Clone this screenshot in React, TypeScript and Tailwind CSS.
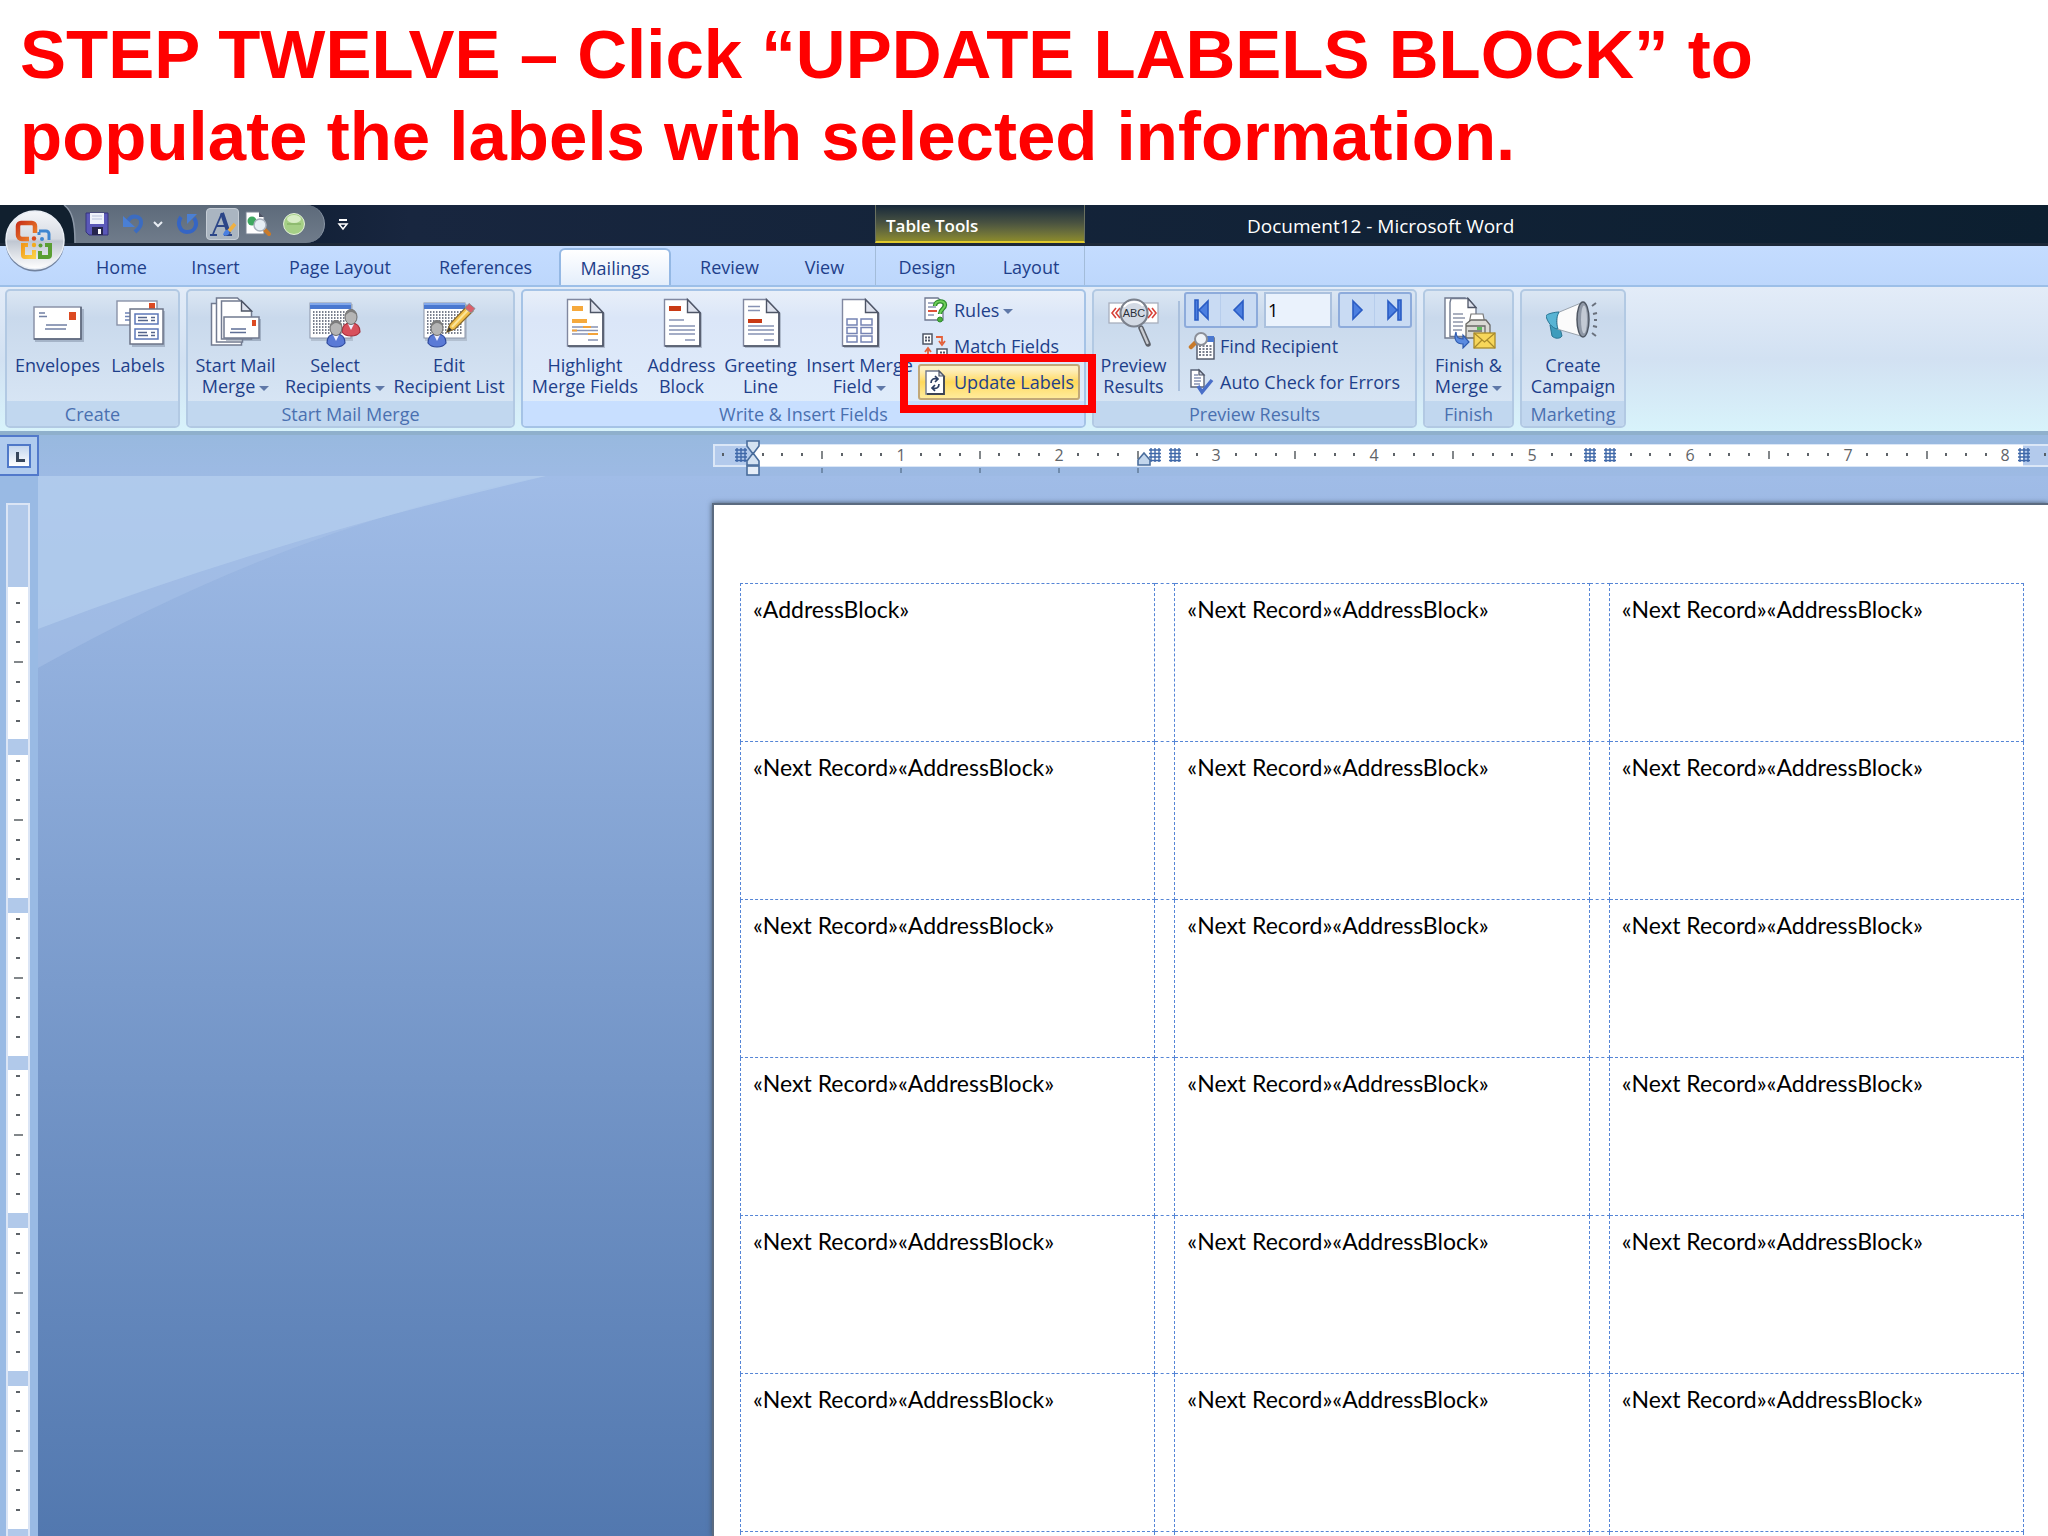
import React from 'react';

type IconProps = { children: React.ReactNode };

const BigIcon: React.FC<IconProps> = ({ children }) => (
  <svg className="h-[54px] w-[54px] shrink-0" viewBox="0 0 54 54" fill="none" aria-hidden="true">
    {children}
  </svg>
);

const SmallIcon: React.FC<IconProps> = ({ children }) => (
  <svg className="h-7 w-7 shrink-0" viewBox="0 0 28 28" fill="none" aria-hidden="true">
    {children}
  </svg>
);

const Person: React.FC<{ x: number; y: number; color: string; edge: string }> = ({ x, y, color, edge }) => (
  <g transform={`translate(${x} ${y})`}>
    <path d="M-9 14C-9 8-6 5 0 5s9 3 9 9c-2 3-5 4-9 4s-7-1-9-4z" fill={color} stroke={edge} strokeWidth="1.2" />
    <path d="M-3 6l3 6 3-6z" fill="#eef" />
    <ellipse cx="0" cy="-1" rx="6" ry="7.5" fill="#b5b5b5" stroke="#6b6b6b" strokeWidth="1" />
    <path d="M-6 -2c0-9 12-9 12 0-2-3-4-4-6-4s-4 2-6 4z" fill="#7d7d7d" />
  </g>
);

const Grid: React.FC = () => (
  <g>
    <rect x="3" y="9" width="42" height="37" fill="#8b95a5" opacity=".4" />
    <rect x="2" y="8" width="41" height="35" fill="#fff" stroke="#8a94a8" strokeWidth="1" />
    <rect x="2" y="8" width="41" height="6" fill="#4a78d0" />
    <rect x="2" y="8" width="41" height="2" fill="#83a8ea" />
    {[17, 20, 23, 26, 29, 32, 35, 38].map((y) => (
      <path key={y} d={`M5 ${y}h36`} stroke="#4d5668" strokeWidth="1.4" strokeDasharray="1.5 1.5" />
    ))}
  </g>
);

const DocSheet: React.FC<IconProps> = ({ children }) => (
  <BigIcon>
    <path d="M11 6h24l12 13v34H11z" fill="#7b8696" opacity=".45" />
    <path d="M9.500 4.500h23L45 17.500V51H9.500z" fill="#fff" stroke="#8188a0" strokeWidth="1.4" />
    <path d="M45 18v33H10" stroke="#4e5566" strokeWidth="1.6" />
    <path d="M32.500 4.500v13H45z" fill="#dfe3ee" stroke="#4e5566" strokeWidth="1.4" />
    {children}
  </BigIcon>
);

const EnvelopeIcon = () => (
  <BigIcon>
    <rect x="4" y="14" width="49" height="33" fill="#76839a" opacity=".45" />
    <rect x="3" y="12" width="47" height="32" fill="#fff" stroke="#8a93a8" strokeWidth="1.5" />
    <path d="M50 12v32H3" stroke="#5a6478" strokeWidth="1.5" />
    <rect x="38" y="17" width="7" height="8" fill="#dc4a22" />
    <path d="M8 18h6M8 21.500h8M15 30h21M14 34h21" stroke="#7280a4" strokeWidth="1.6" />
  </BigIcon>
);

const LabelsIcon = () => (
  <BigIcon>
    <rect x="6" y="6" width="40" height="24" fill="#fff" stroke="#8a93a8" strokeWidth="1.4" />
    <rect x="38" y="8" width="6" height="6" fill="#dc4a22" />
    <path d="M14 18h6M14 21.500h6M14 25h6" stroke="#6d83b5" strokeWidth="1.4" />
    <rect x="21" y="16" width="33" height="36" fill="#76839a" opacity=".45" />
    <rect x="19" y="14" width="33" height="35" fill="#fff" stroke="#6c7488" strokeWidth="1.5" />
    <path d="M24 19h23v10H24zM24 34h23v10H24z" stroke="#5c77b8" strokeWidth="1.5" />
    <path d="M27 22.500h9M40 22.500h4M27 25.500h10M40 25.500h4M27 37.500h9M40 37.500h4M27 40.500h10M40 40.500h4" stroke="#55658c" strokeWidth="1.3" />
  </BigIcon>
);

const StartMergeIcon = () => (
  <BigIcon>
    <path d="M2.500 8.500h30V50h-30z" fill="#fff" stroke="#727b90" strokeWidth="1.5" />
    <path d="M7.500 3h21l5 5v39h-26z" fill="#fff" stroke="#727b90" strokeWidth="1.5" />
    <path d="M12.500 6h20l10 10v28h-30z" fill="#fff" stroke="#727b90" strokeWidth="1.5" />
    <path d="M32.500 6v10h10z" fill="#dfe3ee" stroke="#4e5566" strokeWidth="1.4" />
    <rect x="17" y="24" width="35" height="22" fill="#76839a" opacity=".5" />
    <rect x="15" y="22" width="35" height="21" fill="#fff" stroke="#727b90" strokeWidth="1.5" />
    <rect x="43" y="25" width="4" height="6" fill="#dc4a22" />
    <path d="M22 34h15M21 37.500h16" stroke="#5f6f96" strokeWidth="1.5" />
  </BigIcon>
);

const SelectIcon = () => (
  <BigIcon>
    <Grid />
    <Person x={43} y={23} color="#d8505c" edge="#a5303c" />
    <Person x={28} y={34} color="#5a7ad6" edge="#2f4a9c" />
  </BigIcon>
);

const EditIcon = () => (
  <BigIcon>
    <Grid />
    <path d="M25 37l3-8 17-18 6 5-18 18z" fill="#f2c14a" stroke="#8a6a2a" strokeWidth="1.2" />
    <path d="M30 32l17-18" stroke="#fbe59a" strokeWidth="2" />
    <path d="M25 37l2-5 3 3z" fill="#3b3b3b" />
    <path d="M43 13l4-4.500 6 5-4 4.500z" fill="#d9606a" stroke="#8b8f98" strokeWidth="1" />
    <Person x={15} y={34} color="#5a7ad6" edge="#2f4a9c" />
  </BigIcon>
);

const HighlightIcon = () => (
  <DocSheet>
    <rect x="14" y="11" width="11" height="5" fill="#f6a93c" />
    <rect x="14" y="24" width="15" height="4" fill="#f6a93c" />
    <path d="M14 32h26M14 35.500h26M14 39h26M30 45h10" stroke="#8792b4" strokeWidth="1.6" />
    <path d="M25 32h8M14 35.500h5M30 39h10" stroke="#f2a23a" strokeWidth="2.200" />
  </DocSheet>
);

const AddressIcon = () => (
  <DocSheet>
    <rect x="14" y="11" width="12" height="5" fill="#c93a14" />
    <path d="M14 25h15M14 31h26M14 35h26M14 39h26M30 45h10" stroke="#8792b4" strokeWidth="1.6" />
  </DocSheet>
);

const GreetingIcon = () => (
  <DocSheet>
    <rect x="14" y="24" width="14" height="4" fill="#c93a14" />
    <path d="M14 11.500h12M14 15.500h12M14 31h26M14 35h26M14 39h26M30 45h10" stroke="#8792b4" strokeWidth="1.6" />
  </DocSheet>
);

const MergeFieldIcon = () => (
  <DocSheet>
    <path
      d="M14 24h10v6H14zM28 24h11v6H28zM14 32.500h10v6H14zM28 32.500h11v6H28zM14 41h10v6H14zM28 41h11v6H28z"
      stroke="#7684b4"
      strokeWidth="1.5"
    />
  </DocSheet>
);

const PreviewIcon = () => (
  <BigIcon>
    <rect x="2" y="8" width="49" height="20" fill="#fff" stroke="#a8afbd" strokeWidth="1.3" />
    <path d="M9 13l-4 5 4 5M13 13l-4 5 4 5M41 13l4 5-4 5M45 13l4 5-4 5" stroke="#d8433a" strokeWidth="1.6" />
    <path d="M34 33l7 16" stroke="#5c6068" strokeWidth="5.500" strokeLinecap="round" />
    <path d="M34 33l6.500 15" stroke="#c9ccd2" strokeWidth="2.400" strokeLinecap="round" />
    <circle cx="27" cy="18" r="13.500" fill="#d3dae4" stroke="#7b818c" strokeWidth="2.200" />
    <path d="M17 12c4-6 15-7 19-1" stroke="#fff" strokeWidth="2" />
    <text x="27" y="22" textAnchor="middle" fontSize="11" fontFamily="Liberation Sans" fill="#2a2f38">ABC</text>
  </BigIcon>
);

const FinishIcon = () => (
  <BigIcon>
    <path d="M3 3h20v40H3z" fill="#fff" stroke="#727b90" strokeWidth="1.4" />
    <path d="M8 7.500l1-4h17l8 9v29H8z" fill="#fff" stroke="#727b90" strokeWidth="1.4" />
    <path d="M26 3.500v9h8z" fill="#dfe3ee" stroke="#4e5566" strokeWidth="1.3" />
    <path d="M11 19h10M11 23h12M11 27h10M11 31h10M11 35h9" stroke="#8e97ab" strokeWidth="1.4" />
    <path d="M29 19h12l2 10H27z" fill="#fff" stroke="#777" strokeWidth="1.2" />
    <path d="M24 29l5-4h15l4 5v10l-4 3H24z" fill="#dadad4" stroke="#6a6a66" strokeWidth="1.3" />
    <path d="M24 31h19v11M26 36h14" stroke="#6a6a66" strokeWidth="1.3" />
    <rect x="35" y="32" width="5" height="3" fill="#5cb85c" />
    <rect x="32" y="38" width="21" height="15" fill="#f7d65a" stroke="#a98a2a" strokeWidth="1.3" />
    <path d="M32 38l10.500 9L53 38M32 53l8-8M53 53l-8-8" stroke="#a98a2a" strokeWidth="1.2" />
    <path d="M14 37c0 6 3 7 7 7v-4l6 7-6 6v-4c-6 0-10-4-7-12z" fill="#5b8be0" stroke="#2f5cb0" strokeWidth="1.2" />
  </BigIcon>
);

const CampaignIcon = () => (
  <BigIcon>
    <path d="M4 30l2 11c3 3 8 3 10 0l-2-8z" fill="#3f9cbc" stroke="#2a7593" strokeWidth="1" />
    <path d="M11 18L35 8c5 8 5 24 0 33L11 34z" fill="#fbfbfb" stroke="#9aa3ad" strokeWidth="1" />
    <path d="M0 21c0-2 9-4 13-4-3 6-3 11-1 17-6 0-11-8-12-13z" fill="#58b4d4" stroke="#2a7593" strokeWidth="1" />
    <ellipse cx="37" cy="24.500" rx="6" ry="17.500" fill="#8f98a6" stroke="#4f5763" strokeWidth="1.500" />
    <ellipse cx="38" cy="24.500" rx="3" ry="14" fill="#c3cad4" />
    <path d="M46 11l4-3M47 19l4-1M47 31l4 1M46 38l4 3M48 25h3" stroke="#6a717d" strokeWidth="2" />
  </BigIcon>
);

const RulesIcon = () => (
  <SmallIcon>
    <path d="M3 2h13l5 5v17H3z" fill="#fff" stroke="#6f7890" strokeWidth="1.3" />
    <path d="M6 7h6M6 11h8M6 19h6" stroke="#8792b4" strokeWidth="1.3" />
    <path d="M6 15h9" stroke="#e0523a" strokeWidth="1.8" />
    <path d="M13 10c0-6 10-6 10-1 0 4-5 4-5 9" stroke="#2d8a2d" strokeWidth="4.400" />
    <path d="M13 10c0-6 10-6 10-1 0 4-5 4-5 9" stroke="#6fd05a" strokeWidth="2" />
    <circle cx="18" cy="23.500" r="2.500" fill="#4cb03c" stroke="#2d8a2d" />
  </SmallIcon>
);

const MatchIcon = () => (
  <SmallIcon>
    <rect x="1" y="2" width="9" height="10" fill="#fff" stroke="#4e5566" strokeWidth="1.5" />
    <path d="M3 5.500h5M3 8.500h5" stroke="#4e5566" strokeWidth="1.8" strokeDasharray="2 1" />
    <rect x="15" y="17" width="10" height="10" fill="#fff" stroke="#4e5566" strokeWidth="1.5" />
    <path d="M18 20.500h5M18 23.500h5" stroke="#4e5566" strokeWidth="1.8" strokeDasharray="2 1" />
    <path d="M14 5h6v6M17 9l3 4 3-4M6 25v-8M3 20l3-4 3 4" stroke="#e4603a" strokeWidth="1.8" />
  </SmallIcon>
);

const UpdateIcon = () => (
  <SmallIcon>
    <path d="M4 3h13l5 5v18H4z" fill="#fff" stroke="#6f7890" strokeWidth="1.4" />
    <path d="M22 8v18H5" stroke="#3c4354" strokeWidth="1.8" />
    <path d="M17 3v5h5z" fill="#cfd6e4" stroke="#4e5566" strokeWidth="1.2" />
    <path d="M9 15c0-4 3-5 6-4M13 8l3 3-3 3M17 16c0 4-3 5-6 4M13 23l-3-3 3-3" stroke="#2b3d62" strokeWidth="1.7" />
  </SmallIcon>
);

const FindIcon = () => (
  <SmallIcon>
    <rect x="9" y="6" width="17" height="21" fill="#fff" stroke="#4e5566" strokeWidth="1.4" />
    <rect x="17" y="4" width="9" height="6" fill="#4a78d0" />
    {[14, 17, 20, 23].map((y) => (
      <path key={y} d={`M11 ${y}h14`} stroke="#4d5668" strokeWidth="1.6" strokeDasharray="2 1.500" />
    ))}
    <path d="M3 15l4-4" stroke="#c87a2a" strokeWidth="4.500" strokeLinecap="round" />
    <circle cx="13" cy="7" r="6" fill="#eef3f8" stroke="#8b8f98" strokeWidth="2" />
  </SmallIcon>
);

const CheckIcon = () => (
  <SmallIcon>
    <path d="M3 2h8l5 5v12H3z" fill="#fff" stroke="#5b6478" strokeWidth="1.4" />
    <path d="M11 2v5h5z" fill="#cfd6e4" stroke="#4e5566" strokeWidth="1.2" />
    <path d="M6 7h4M6 10h7M6 13h7M6 16h6" stroke="#8792b4" strokeWidth="1.4" />
    <path d="M10 18l4 6L24 12" stroke="#4a6fc8" strokeWidth="3.500" />
  </SmallIcon>
);

const Caret = () => <span className="ml-1 inline-block border-x-[5px] border-t-[5px] border-x-transparent border-t-[#5f78a8] align-middle" />;

interface BigButtonProps {
  icon: React.ReactNode;
  lines: string[];
  width: string;
  caret?: boolean;
}

const BigButton: React.FC<BigButtonProps> = ({ icon, lines, width, caret }) => (
  <button className={`flex shrink-0 flex-col items-center gap-[6px] whitespace-nowrap pt-1 leading-[21px] ${width}`}>
    {icon}
    <span className="block">
      {lines.map((line, i) => (
        <span key={line} className="block">
          {line}
          {caret && i === lines.length - 1 && <Caret />}
        </span>
      ))}
    </span>
  </button>
);

interface GroupProps {
  title: string;
  width: string;
  active?: boolean;
  children: React.ReactNode;
}

const Group: React.FC<GroupProps> = ({ title, width, active, children }) => (
  <section
    className={`flex h-[139px] shrink-0 flex-col overflow-hidden rounded-[5px] border-2 ${width} ${
      active
        ? 'border-[#a5c3e6] bg-linear-to-b from-[#e8eff9] from-0% via-[#dbe6f8] via-20% to-[#e0edfb]'
        : 'border-[#b2c9e3] bg-linear-to-b from-[#dbe6f3] from-0% via-[#c9d9ec] via-20% to-[#dbe8f6]'
    }`}
  >
    <div className="flex flex-1">{children}</div>
    <h2 className={`h-[25px] text-center leading-[27px] text-[#4a70b0] ${active ? 'bg-[#c8dfff]' : 'bg-[#c1d7ef]'}`}>{title}</h2>
  </section>
);

const SmallButton: React.FC<{ icon: React.ReactNode; label: string; caret?: boolean }> = ({ icon, label, caret }) => (
  <button className="flex h-9 items-center gap-1 whitespace-nowrap pl-1">
    {icon}
    <span>
      {label}
      {caret && <Caret />}
    </span>
  </button>
);

const TABS = [
  { name: 'Home', cls: 'w-[91px]' },
  { name: 'Insert', cls: 'w-[97px]' },
  { name: 'Page Layout', cls: 'w-[152px]' },
  { name: 'References', cls: 'w-[139px]' },
  { name: 'Mailings', cls: 'mx-1 w-[112px]' },
  { name: 'Review', cls: 'w-[109px]' },
  { name: 'View', cls: 'mr-[10px] w-[81px]' },
];

const OfficeButton = () => (
  <button aria-label="Office" className="absolute left-1 top-[5px] z-10">
    <svg className="h-[62px] w-[62px]" viewBox="0 0 62 62" fill="none">
      <defs>
        <linearGradient id="orb" x1="0" y1="0" x2="0" y2="1">
          <stop offset="0" stopColor="#f4f6f9" />
          <stop offset=".48" stopColor="#d5dae2" />
          <stop offset=".52" stopColor="#bfc6d1" />
          <stop offset="1" stopColor="#ffffff" />
        </linearGradient>
        <linearGradient id="flame" x1="0" y1="0" x2="1" y2="1">
          <stop offset="0" stopColor="#c9341a" />
          <stop offset="1" stopColor="#f08a2c" />
        </linearGradient>
        <linearGradient id="amber" x1="0" y1="0" x2="1" y2="1">
          <stop offset="0" stopColor="#f29a1a" />
          <stop offset="1" stopColor="#fbcf45" />
        </linearGradient>
      </defs>
      <circle cx="31" cy="32" r="29.500" fill="#3d4a60" opacity=".6" />
      <circle cx="31" cy="30" r="29" fill="url(#orb)" stroke="#e9eef5" strokeWidth="1.500" />
      <path d="M25 29h-7a4 4 0 01-4-4V16a3 3 0 013-3h11a3 3 0 013 3v7" stroke="url(#flame)" strokeWidth="4.500" />
      <circle cx="30" cy="28.500" r="2.200" fill="#d9481c" />
      <path d="M35 25v-4h7a3 3 0 013 3v6" stroke="#3f86d0" strokeWidth="3" strokeDasharray="3 1 20" />
      <path d="M36 29a2 2 0 104 0 2 2 0 10-4 0z" fill="#3f86d0" />
      <path d="M24 35h-5v10a2 2 0 002 2h9v-7" stroke="url(#amber)" strokeWidth="4" />
      <circle cx="30" cy="35" r="2.200" fill="#f2ab1e" />
      <path d="M41 35h5v10a2 2 0 01-2 2h-8v-6" stroke="#5a9e32" strokeWidth="4" />
      <circle cx="36.500" cy="35.500" r="2" fill="#5a9e32" />
    </svg>
  </button>
);

const QuickAccess = () => (
  <div className="flex h-[38px] w-[325px] items-center overflow-hidden rounded-r-full border-r border-[#8d99a8] bg-linear-to-b from-[#5d6a7a] to-[#707c8b]">
    <svg className="mr-2 h-[38px] w-[77px] shrink-0" viewBox="0 0 77 38" fill="none" aria-hidden="true">
      <path d="M0 0H64C72 6 75 16 75 38H0z" fill="#11202f" />
      <path d="M64 0C72 6 75 16 75 38" stroke="#8d99a8" strokeWidth="1.500" />
    </svg>
    <button aria-label="Save" className="h-6 w-6">
      <svg viewBox="0 0 24 24" fill="none">
        <path d="M1 1h22v22H4l-3-3z" fill="#5a58b8" stroke="#34337c" />
        <rect x="5" y="1" width="14" height="11" fill="#eef2fb" />
        <path d="M7 4h10M7 7h10" stroke="#b7c2dd" />
        <rect x="7" y="15" width="11" height="8" fill="#26264e" />
        <rect x="13" y="17" width="3" height="5" fill="#fff" />
      </svg>
    </button>
    <button aria-label="Undo" className="ml-[13px] h-6 w-6">
      <svg viewBox="0 0 24 24" fill="none">
        <path d="M6 9c4-7 14-5 13 2 0 4-3 6-6 9" stroke="#3c6cc0" strokeWidth="4" />
        <path d="M1 4v11h12z" fill="#4a7fd4" />
      </svg>
    </button>
    <svg className="ml-[6px] h-3 w-3" viewBox="0 0 12 12" fill="none" aria-hidden="true">
      <path d="M2 4l4 4 4-4" stroke="#e8edf4" strokeWidth="2" />
    </svg>
    <button aria-label="Repeat" className="ml-3 h-6 w-6">
      <svg viewBox="0 0 24 24" fill="none">
        <path d="M5 5c-4 5-2 15 6 15 9 0 11-9 7-14" stroke="#3565c4" strokeWidth="4" />
        <path d="M11 2h10L11 12z" fill="#4a7fd4" />
      </svg>
    </button>
    <button aria-label="Styles" className="ml-[6px] flex h-8 w-[33px] items-center justify-center rounded-sm border border-[#c5cdd6] bg-[#aab5c1]">
      <svg className="h-7 w-7" viewBox="0 0 28 28" fill="none">
        <path d="M4 24L13 3" stroke="#2c4688" strokeWidth="1.800" />
        <path d="M13 3l7 21" stroke="#2c4688" strokeWidth="4" />
        <path d="M1 25h7M15 25h8M8 16h9" stroke="#2c4688" strokeWidth="2" />
        <path d="M14 25c1-5 4-6 7-5l-1 4c-2 2-4 2-6 1z" fill="#4a7fe0" />
        <path d="M20 21l6-7" stroke="#f0b040" strokeWidth="3.500" />
      </svg>
    </button>
    <button aria-label="Print Preview" className="ml-[6px] h-[26px] w-[26px]">
      <svg viewBox="0 0 26 26" fill="none">
        <path d="M1 1h13l5 5v17H1z" fill="#fff" stroke="#7b8494" />
        <path d="M14 1v5h5z" fill="#4e5566" />
        <circle cx="7" cy="10" r="4.500" fill="#3fa860" />
        <path d="M19 18l5 5" stroke="#c87a2a" strokeWidth="4" strokeLinecap="round" />
        <circle cx="15" cy="14" r="6" fill="#e6eef4" stroke="#a9b2be" strokeWidth="1.500" />
      </svg>
    </button>
    <button aria-label="Sync" className="ml-3 h-[22px] w-[22px]">
      <svg viewBox="0 0 22 22">
        <circle cx="11" cy="11" r="10.500" fill="#a5cf86" stroke="#e3efd8" />
        <ellipse cx="11" cy="6" rx="7" ry="4" fill="#d8edc6" />
        <path d="M4 11h14" stroke="#8fbb70" strokeWidth="2" />
      </svg>
    </button>
  </div>
);

const TitleBar = () => (
  <header className="flex h-[41px] border-b-[3px] border-[#1c2838] bg-linear-to-r from-[#0d1c31] from-10% via-[#18263f] via-20% to-[#0c1f30] text-white">
    <QuickAccess />
    <button aria-label="Customize" className="ml-[12px] h-[38px] w-3">
      <svg viewBox="0 0 12 38" className="h-[38px] w-3" fill="none">
        <path d="M2 15h8" stroke="#fff" strokeWidth="2" />
        <path d="M2 19h8l-4 5z" stroke="#fff" strokeWidth="1.500" />
      </svg>
    </button>
    <div className="ml-[526px] w-[210px] shrink-0 border-x border-b-2 border-x-[#6a7160] border-b-[#e0c92c] bg-linear-to-b from-[#17283a] via-[#4a5340] to-[#8b8a2a] pl-[10px] text-[17px] font-semibold leading-[42px]">
      Table Tools
    </div>
    <div className="ml-[162px] whitespace-nowrap text-[19px] leading-[42px]">Document12 - Microsoft Word</div>
  </header>
);

const TabRow = () => (
  <nav className="flex h-[39px] items-end bg-linear-to-b from-[#c4dcff] to-[#bdd7fc] pl-[76px] text-[#1e3f8a]">
    {TABS.map((tab) => (
      <button
        key={tab.name}
        className={`h-[37px] shrink-0 whitespace-nowrap ${tab.cls} ${
          tab.name === 'Mailings'
            ? 'rounded-t-md border-2 border-b-0 border-[#94b8e4] bg-linear-to-b from-white to-[#e4eefb] leading-[32px]'
            : 'leading-[36px]'
        }`}
      >
        {tab.name}
      </button>
    ))}
    <div className="flex h-[39px] shrink-0 border-x border-[#a3bcd9] pt-[3px]">
      <button className="w-[102px]">Design</button>
      <button className="w-[106px]">Layout</button>
    </div>
  </nav>
);

const NAV_GLYPHS: Record<string, string> = {
  'First record': 'M9 6h3v20H9zM13 16l9-9v18z',
  'Previous record': 'M13 16l9-9v18z',
  'Next record': 'M13 7l9 9-9 9z',
  'Last record': 'M13 7l9 9-9 9zM23 6h3v20h-3z',
};

const NavPair: React.FC<{ labels: string[] }> = ({ labels }) => (
  <div className="flex rounded-[3px] border-2 border-[#8dabdb] bg-[#c9dbf3]">
    {labels.map((label, i) => (
      <button key={label} aria-label={label} className={`h-8 w-[35px] ${i === 0 ? 'border-r border-[#b7cdec]' : ''}`}>
        <svg viewBox="0 0 34 32" className="h-8 w-[34px]">
          <path d={NAV_GLYPHS[label]} fill="#4c7fe0" stroke="#2a5cc4" strokeWidth="1.600" />
        </svg>
      </button>
    ))}
  </div>
);

const Ribbon = () => (
  <div className="flex h-[150px] gap-[6px] overflow-hidden border-b-4 border-t-2 border-b-[#8fb0cc] border-t-[#9cbfe8] bg-linear-to-b from-[#e3ecf8] via-[#d2e1f2] to-[#d8f3fb] pl-[5px] pt-[2px] text-[#1e3f8a]">
    <Group title="Create" width="w-[175px]">
      <BigButton icon={<EnvelopeIcon />} lines={['Envelopes']} width="w-[101px]" />
      <BigButton icon={<LabelsIcon />} lines={['Labels']} width="w-[60px]" />
    </Group>
    <Group title="Start Mail Merge" width="w-[329px]">
      <BigButton icon={<StartMergeIcon />} lines={['Start Mail', 'Merge']} caret width="w-[95px]" />
      <BigButton icon={<SelectIcon />} lines={['Select', 'Recipients']} caret width="w-[104px]" />
      <BigButton icon={<EditIcon />} lines={['Edit', 'Recipient List']} width="w-[124px]" />
    </Group>
    <Group title="Write & Insert Fields" width="w-[565px]" active>
      <BigButton icon={<HighlightIcon />} lines={['Highlight', 'Merge Fields']} width="w-[124px]" />
      <BigButton icon={<AddressIcon />} lines={['Address', 'Block']} width="w-[69px]" />
      <BigButton icon={<GreetingIcon />} lines={['Greeting', 'Line']} width="w-[89px]" />
      <BigButton icon={<MergeFieldIcon />} lines={['Insert Merge', 'Field']} caret width="w-[109px]" />
      <div className="ml-1 flex flex-1 flex-col pt-px">
        <SmallButton icon={<RulesIcon />} label="Rules" caret />
        <SmallButton icon={<MatchIcon />} label="Match Fields" />
        <button className="flex h-9 w-[162px] items-center gap-1 whitespace-nowrap rounded-[3px] border-2 border-[#c2a877] bg-linear-to-b from-[#fdf0c0] from-10% via-[#ffd95a] via-50% to-[#ffeb9a] pl-[2px]">
          <UpdateIcon />
          Update Labels
        </button>
      </div>
    </Group>
    <Group title="Preview Results" width="w-[325px]">
      <BigButton icon={<PreviewIcon />} lines={['Preview', 'Results']} width="w-[79px]" />
      <div className="ml-[5px] mt-[10px] h-[90px] w-[2px] shrink-0 bg-[#a9bfdc]" />
      <div className="ml-1 flex flex-col pt-px">
        <div className="flex h-9 gap-[6px]">
          <NavPair labels={['First record', 'Previous record']} />
          <input aria-label="Record" defaultValue="1" className="w-[68px] border-2 border-[#abc1de] bg-[#eaf2fc] pl-[2px] text-black" />
          <NavPair labels={['Next record', 'Last record']} />
        </div>
        <SmallButton icon={<FindIcon />} label="Find Recipient" />
        <SmallButton icon={<CheckIcon />} label="Auto Check for Errors" />
      </div>
    </Group>
    <Group title="Finish" width="w-[91px]">
      <BigButton icon={<FinishIcon />} lines={['Finish &', 'Merge']} caret width="w-[87px]" />
    </Group>
    <Group title="Marketing" width="w-[106px]">
      <BigButton icon={<CampaignIcon />} lines={['Create', 'Campaign']} width="w-[102px]" />
    </Group>
  </div>
);

const INCH = 157.8;
const ZERO = 30;
const STOPS = [28, 442, 462, 877, 897, 1311];
const HIDDEN = [21, 22, 43, 44, 65];

const HorizontalRuler = () => (
  <svg className="block h-[41px] w-full" fill="none" aria-hidden="true">
    <rect x="1" y="10" width="1400" height="21" fill="#b3caec" stroke="#dbe7f7" strokeWidth="2" />
    <rect x="40" y="10" width="1270" height="21" fill="#fff" />
    {Array.from({ length: 68 }, (_, i) => i - 1).map((i) => {
      const x = Math.round(ZERO + (i * INCH) / 8);
      if (i === 0 || HIDDEN.includes(i)) return null;
      if (i % 8 === 0)
        return (
          <text key={i} x={x} y="26" textAnchor="middle" fontSize="16" fontFamily="Open Sans" fill="#5f6468">
            {i / 8}
          </text>
        );
      const half = i % 4 === 0;
      return <path key={i} d={half ? `M${x} 16v8` : `M${x} 18v3`} stroke="#4d5358" strokeWidth={half ? 1.4 : 1.8} />;
    })}
    {[4, 8, 12, 16, 20].map((i) => (
      <path key={i} d={`M${Math.round(ZERO + (i * INCH) / 8)} 33v5`} stroke="#5d7894" strokeWidth="1.400" />
    ))}
    {STOPS.map((x) => (
      <path
        key={x}
        d={`M${x - 4} 13v14M${x} 13v14M${x + 4} 13v14M${x - 6} 15h12M${x - 6} 18.500h12M${x - 6} 22h12M${x - 6} 25.500h12`}
        stroke="#3e67a8"
        strokeWidth="1.400"
      />
    ))}
    <g stroke="#4a6d9c" strokeWidth="1.600">
      <path d="M34 6h12v5l-6 8-6-8zM40 18l6 8v4H34v-4z" fill="#d4e2f2" />
      <rect x="34" y="31" width="12" height="9" fill="#e6eef8" />
      <path d="M431 18l6 7v5h-12v-5z" fill="#c3d6ec" />
    </g>
  </svg>
);

const VerticalRuler = () => (
  <svg className="block h-full w-[38px] shrink-0 bg-[#99bae4]" fill="none" aria-hidden="true">
    <rect x="7" y="28" width="22" height="1400" fill="#b1c9ea" stroke="#dbe5f5" strokeWidth="2" />
    {Array.from({ length: 7 }, (_, n) => {
      const top = Math.round(107 + n * INCH);
      return (
        <g key={n}>
          <rect x="8" y={n === 0 ? top + 4 : top + 14} width="20" height={n === 0 ? 152 : 143} fill="#fff" />
          {[1, 2, 3, 4, 5, 6, 7].map((k) => {
            const y = Math.round(top + (k * INCH) / 8);
            return <path key={k} d={k === 4 ? `M14 ${y}h9` : `M16 ${y}h4`} stroke="#4d5358" strokeWidth={k === 4 ? 1.4 : 1.8} />;
          })}
        </g>
      );
    })}
  </svg>
);

const Swoosh = () => (
  <svg className="block h-[200px] w-[520px]" fill="none" aria-hidden="true">
    <path d="M0 0H508Q257 48 0 192z" fill="#a9c4ea" opacity=".5" />
    <path d="M0 0H508Q240 62 0 153z" fill="#b6d0ee" opacity=".65" />
  </svg>
);

const NEXT = '«Next Record»«AddressBlock»';

// the last row only starts above the fold, its cells are still blank
const ROWS = [['«AddressBlock»', NEXT, NEXT], ...Array.from({ length: 5 }, () => [NEXT, NEXT, NEXT]), ['', '', '']];

const cell = 'border border-dashed border-[#5585d6] align-top';

const LabelTable = () => (
  <table className="w-[1284px] table-fixed border-collapse whitespace-nowrap font-['Lato','Liberation_Sans',sans-serif] text-[23px] leading-7 text-black">
    <colgroup>
      <col />
      <col className="w-5" />
      <col />
      <col className="w-5" />
      <col />
    </colgroup>
    <tbody>
      {ROWS.map(([a, b, c], row) => (
        <tr key={row} className="h-[158px]">
          <td className={`${cell} pl-3 pt-[11px]`}>{a}</td>
          <td className={cell} />
          <td className={`${cell} pl-3 pt-[11px]`}>{b}</td>
          <td className={cell} />
          <td className={`${cell} pl-3 pt-[11px]`}>{c}</td>
        </tr>
      ))}
    </tbody>
  </table>
);

export default function App() {
  return (
    <div className="flex h-screen flex-col overflow-hidden bg-white">
      <h1 className="px-5 pb-[27px] pt-[14px] font-['Liberation_Sans',Arial,sans-serif] text-[69px] font-bold leading-[82px] text-[#ff0000]">
        STEP TWELVE – Click “UPDATE LABELS BLOCK” to
        <br />
        populate the labels with selected information.
      </h1>
      <div className="relative flex min-h-0 flex-1 flex-col font-['Open_Sans','Noto_Sans',sans-serif] text-[18px]">
        <OfficeButton />
        <TitleBar />
        <TabRow />
        <div className="relative">
          <Ribbon />
          <div className="pointer-events-none absolute left-[900px] top-[69px] h-[59px] w-[196px] border-8 border-[#ff0000]" />
        </div>
        <div className="flex h-[41px] shrink-0 bg-linear-to-b from-[#98b9df] to-[#9dbae4]">
          <div className="flex w-[39px] shrink-0 items-center border-2 border-l-0 border-[#5279cb] bg-[#b0cbee] pl-[7px]">
            <button aria-label="Tab stop" className="h-6 w-6 border-2 border-[#4f78c8] bg-linear-to-b from-[#c3d6ee] to-white pl-[7px] pt-[2px]">
              <span className="block h-[10px] w-[9px] border-b-[3px] border-l-[3px] border-[#38475c]" />
            </button>
          </div>
          <div className="flex-[674]" />
          <div className="min-w-0 flex-[1336]">
            <HorizontalRuler />
          </div>
        </div>
        <div className="flex min-h-0 flex-1">
          <VerticalRuler />
          <div className="flex min-w-0 flex-1 bg-linear-to-b from-[#a0bce7] to-[#5278af]">
            <div className="min-w-0 flex-[674]">
              <Swoosh />
            </div>
            <div className="min-w-0 flex-[1336] pt-[27px]">
              <main className="h-full overflow-hidden border-l-2 border-t-2 border-[#5b6b80] bg-white pl-[26px] pt-[78px] shadow-[0_0_5px_#456]">
                <LabelTable />
              </main>
            </div>
          </div>
        </div>
      </div>
    </div>
  );
}
